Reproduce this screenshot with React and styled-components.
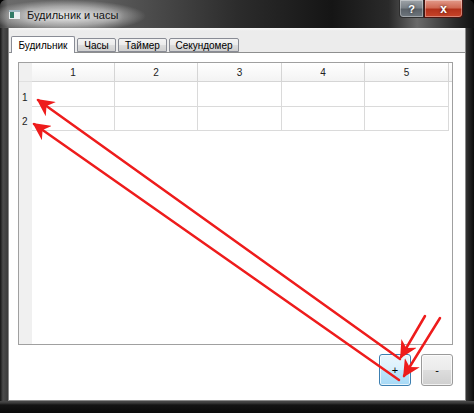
import React from "react";
import styled, { createGlobalStyle } from "styled-components";

const GlobalStyle = createGlobalStyle`
  html, body {
    margin: 0;
    padding: 0;
    background: #000;
  }
  body {
    font-family: "Liberation Sans", Arial, sans-serif;
    font-size: 10px;
  }
`;

const Window = styled.div`
  position: relative;
  width: 474px;
  height: 413px;
  display: flex;
  flex-direction: column;
  box-sizing: border-box;
  background: linear-gradient(to right, #141414 0px, #4b4b4b 3px, #3a3a3a 8px, #2a2a2a 50%, #262626 95%, #3c3c3c 98%, #0a0a0a 100%);
  border-radius: 6px 6px 0 0;
  overflow: hidden;
`;

const TitleBar = styled.div`
  height: 28px;
  flex: none;
  display: flex;
  align-items: flex-start;
  padding: 0 10px 0 9px;
  background:
    radial-gradient(ellipse 80px 16px at 66px 16px, rgba(230, 230, 230, 1), rgba(210, 210, 210, 0.6) 60%, transparent 100%),
    linear-gradient(to right, #3d3d3d 0px, #6a6a6a 8px, #606060 20%, #2c2c2c 50%, #151515 70%, #2a2a2a 82%, #6a6a6a 88%, #2a2a2a 96%, #111 100%);
`;

const AppIcon = styled.svg`
  margin-top: 10px;
  width: 11px;
  height: 9px;
  flex: none;
`;

const Caption = styled.span`
  margin: 9px 0 0 7px;
  color: #141414;
  font-size: 11px;
  text-shadow: 0 0 6px rgba(255, 255, 255, 0.9);
  flex: 1;
`;

const CaptionButtons = styled.div`
  display: flex;
  margin-right: 1px;
`;

const CaptionButton = styled.div`
  width: ${(p) => (p.$close ? 39 : 25)}px;
  height: 18px;
  box-sizing: border-box;
  border: 1px solid ${(p) => (p.$close ? "#4a1410" : "#2e2e2e")};
  border-top: none;
  border-radius: ${(p) => (p.$close ? "0 0 4px 0" : "0 0 0 4px")};
  background: ${(p) =>
    p.$close
      ? "linear-gradient(#e29a8a 0%, #d06a54 45%, #b3321b 55%, #c7442a 100%)"
      : "linear-gradient(#9ea3a8 0%, #7b8288 45%, #5a6168 55%, #6f777e 100%)"};
  color: #fff;
  font-weight: bold;
  font-size: ${(p) => (p.$close ? 12 : 11)}px;
  display: flex;
  align-items: center;
  justify-content: center;
  text-shadow: 0 0 3px rgba(0, 0, 0, 0.7);
  box-shadow: inset 0 0 0 1px rgba(255, 255, 255, 0.35);
`;

const Client = styled.div`
  flex: 1;
  margin: 0 8px;
  display: flex;
  flex-direction: column;
  background: #fff;
  border: 1px solid #8a8a8a;
  border-top: none;
`;

const TabStrip = styled.div`
  height: 24px;
  flex: none;
  display: flex;
  align-items: flex-end;
  padding-left: 2px;
  background: linear-gradient(#f7f7f7 0px, #ececec 3px, #ececec 100%);
  border-bottom: 1px solid #8e8f8f;
`;

const Tab = styled.div`
  height: ${(p) => (p.$active ? 17 : 14)}px;
  width: ${(p) => p.$w}px;
  box-sizing: border-box;
  margin-bottom: ${(p) => (p.$active ? -1 : 0)}px;
  margin-left: ${(p) => (p.$active ? 0 : 2)}px;
  border: 1px solid #898c95;
  border-bottom: ${(p) => (p.$active ? "none" : "1px solid #898c95")};
  border-radius: 2px 2px 0 0;
  background: ${(p) => (p.$active ? "#fff" : "linear-gradient(#f3f3f3 0%, #ebebeb 50%, #dddddd 51%, #cfcfcf 100%)")};
  color: #000;
  display: flex;
  align-items: center;
  justify-content: center;
  padding-top: ${(p) => (p.$active ? 0 : 1)}px;
`;

const Pane = styled.div`
  flex: 1;
  display: flex;
  flex-direction: column;
  padding: 9px 12px 14px 9px;
`;

const Table = styled.div`
  flex: 1;
  display: grid;
  grid-template-columns: 13px 83px 83px 84px 83px 84px 1fr;
  grid-template-rows: 19px 25px 24px 1fr;
  border: 1px solid #a0a0a0;
  background: #fff;
`;

const Corner = styled.div`
  background: #f0f0f0;
  border-bottom: 1px solid #e0e0e0;
`;

const HeadCell = styled.div`
  background: linear-gradient(#ffffff, #f3f3f3);
  border-right: 1px solid #d5d5d5;
  border-bottom: 1px solid #d5d5d5;
  display: flex;
  align-items: center;
  justify-content: center;
  color: #222;
`;

const HeadFill = styled.div`
  background: linear-gradient(#ffffff, #f3f3f3);
  border-bottom: 1px solid #d5d5d5;
`;

const RowHead = styled.div`
  background: #f0f0f0;
  display: flex;
  align-items: center;
  padding-left: 3px;
  color: #222;
  padding-top: 5px;
`;

const Cell = styled.div`
  border-right: 1px solid #dadada;
  border-bottom: 1px solid #dadada;
`;

const Strip = styled.div`
  background: #f0f0f0;
`;

const ButtonRow = styled.div`
  display: flex;
  justify-content: flex-end;
  gap: 10px;
  margin-top: 9px;
`;

const PushButton = styled.div`
  width: 32px;
  height: 32px;
  box-sizing: border-box;
  border-radius: 3px;
  border: 1px solid ${(p) => (p.$hot ? "#3c7fb1" : "#9a9a9a")};
  background: ${(p) =>
    p.$hot
      ? "linear-gradient(#eaf6fd 0%, #d9f0fc 50%, #bee6fd 51%, #a7d9f5 100%)"
      : "linear-gradient(#f2f2f2 0%, #ebebeb 50%, #dddddd 51%, #cfcfcf 100%)"};
  box-shadow: inset 0 0 0 1px rgba(255, 255, 255, 0.7);
  display: flex;
  align-items: center;
  justify-content: center;
  font-size: 11px;
  color: #000;
`;

const BottomFrame = styled.div`
  height: 12px;
  flex: none;
  background: linear-gradient(#4a4a4a 0px, #3a3a3a 2px, #141414 4px, #0a0a0a 100%);
`;

const Overlay = styled.svg`
  position: absolute;
  left: 0;
  top: 0;
  pointer-events: none;
`;

const cols = ["1", "2", "3", "4", "5"];

const App = () => {
  return (
    <>
      <GlobalStyle />
      <Window>
        <TitleBar>
          <AppIcon viewBox="0 0 11 9">
            <rect x="0" y="0" width="11" height="9" fill="#e8eef0" />
            <rect x="1" y="2" width="4" height="6" fill="#2f7a66" />
            <rect x="0" y="0" width="11" height="2" fill="#9fb7c2" />
          </AppIcon>
          <Caption>Будильник и часы</Caption>
          <CaptionButtons>
            <CaptionButton>?</CaptionButton>
            <CaptionButton $close>x</CaptionButton>
          </CaptionButtons>
        </TitleBar>
        <Client>
          <TabStrip>
            <Tab $active $w={64}>Будильник</Tab>
            <Tab $w={39}>Часы</Tab>
            <Tab $w={49}>Таймер</Tab>
            <Tab $w={70}>Секундомер</Tab>
          </TabStrip>
          <Pane>
            <Table>
              <Corner />
              {cols.map((c) => (
                <HeadCell key={c}>{c}</HeadCell>
              ))}
              <HeadFill />
              {["1", "2"].map((r) => (
                <React.Fragment key={r}>
                  <RowHead>{r}</RowHead>
                  {cols.map((c) => (
                    <Cell key={c} />
                  ))}
                  <div />
                </React.Fragment>
              ))}
              <Strip />
            </Table>
            <ButtonRow>
              <PushButton $hot>+</PushButton>
              <PushButton>-</PushButton>
            </ButtonRow>
          </Pane>
        </Client>
        <BottomFrame />
        <Overlay width="474" height="413" viewBox="0 0 474 413">
          <defs>
            <marker id="head" viewBox="0 0 10 10" refX="9" refY="5" markerWidth="7" markerHeight="7" orient="auto-start-reverse" markerUnits="strokeWidth">
              <path d="M0 0 L10 5 L0 10 L3 5 Z" fill="#ee1c1c" />
            </marker>
          </defs>
          <g stroke="#ee1c1c" strokeWidth="2.5" fill="none" strokeLinecap="round">
            <line x1="400" y1="359" x2="38" y2="100" markerEnd="url(#head)" />
            <line x1="425" y1="316" x2="401" y2="357" markerEnd="url(#head)" />
            <line x1="399" y1="380" x2="34" y2="124" markerEnd="url(#head)" />
            <line x1="440" y1="318" x2="404" y2="376" markerEnd="url(#head)" />
          </g>
        </Overlay>
      </Window>
    </>
  );
};

export default App;
